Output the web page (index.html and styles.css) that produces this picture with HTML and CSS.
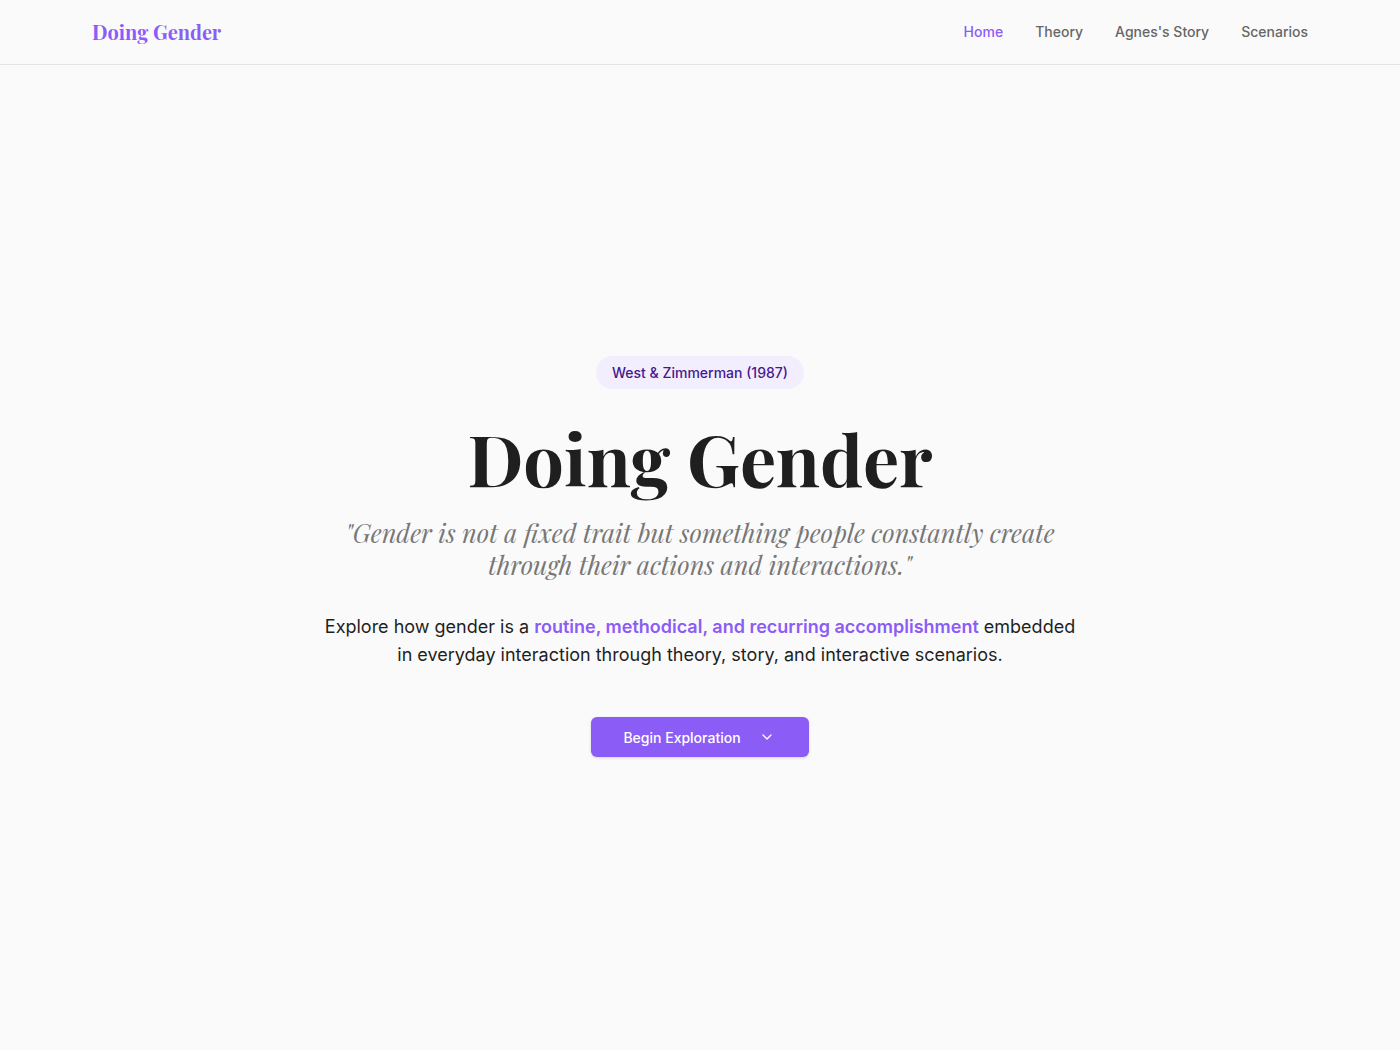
FILE: index.html
```html
<!DOCTYPE html>
<html lang="en">
<head>
<meta charset="utf-8">
<title>Doing Gender</title>
<link rel="stylesheet" href="styles.css">
</head>
<body>
<header class="site-header">
  <div class="header-inner">
    <a class="logo" href="#">Doing Gender</a>
    <nav class="nav">
      <a class="nav-link active" href="#">Home</a>
      <a class="nav-link" href="#">Theory</a>
      <a class="nav-link" href="#">Agnes's Story</a>
      <a class="nav-link" href="#">Scenarios</a>
    </nav>
  </div>
</header>
<main class="hero">
  <div class="hero-content">
    <span class="badge">West &amp; Zimmerman (1987)</span>
    <h1 class="title">Doing Gender</h1>
    <p class="quote">"Gender is not a fixed trait but something people constantly create<br>through their actions and interactions."</p>
    <p class="lead">Explore how gender is a <strong class="accent">routine, methodical, and recurring accomplishment</strong> embedded in everyday interaction through theory, story, and interactive scenarios.</p>
    <button class="cta" type="button">
      <span>Begin Exploration</span>
      <svg class="chev" width="16" height="16" viewBox="0 0 24 24" fill="none" stroke="currentColor" stroke-width="2" stroke-linecap="round" stroke-linejoin="round"><path d="M6 9l6 6 6-6"/></svg>
    </button>
  </div>
</main>
</body>
</html>
```

FILE: styles.css
```css
* { box-sizing: border-box; }
html, body { margin: 0; padding: 0; }
body {
  background: #fafafa;
  font-family: Inter, "Noto Sans", sans-serif;
  color: #1f1f1f;
}
.site-header {
  height: 65px;
  border-bottom: 1px solid #e5e5e5;
  background: #fafafa;
}
.header-inner {
  max-width: 1216px;
  margin: 0 auto;
  height: 63px;
  display: flex;
  align-items: center;
  justify-content: space-between;
}
.logo {
  font-family: "Playfair Display", "Liberation Serif", "DejaVu Serif", serif;
  font-weight: 700;
  font-size: 20px;
  color: #8b5cf6;
  text-decoration: none;
}
.nav {
  display: flex;
  gap: 32px;
}
.nav-link {
  font-size: 14px;
  color: #666;
  text-decoration: none;
  font-weight: 500;
}
.nav-link.active { color: #8b5cf6; }
.hero {
  min-height: calc(100vh - 65px);
  display: flex;
  align-items: center;
  justify-content: center;
}
.hero-content {
  display: flex;
  flex-direction: column;
  align-items: center;
  text-align: center;
  padding-bottom: 2px;
}
.badge {
  display: inline-block;
  background: #f3eefe;
  color: #46198f;
  font-size: 14px;
  font-weight: 500;
  padding: 7px 16px;
  border-radius: 999px;
  line-height: 19px;
}
.title {
  font-family: "Playfair Display", "Liberation Serif", "DejaVu Serif", serif;
  font-weight: 700;
  font-size: 72px;
  line-height: 80px;
  color: #1f1f1f;
  margin: 28px 0 20px;
}
.quote {
  font-family: "Playfair Display", "Liberation Serif", "DejaVu Serif", serif;
  font-style: italic;
  font-size: 25.4px;
  line-height: 32px;
  color: #777;
  margin: 0 0 32px;
}
.lead {
  font-size: 18px;
  line-height: 28px;
  max-width: 760px;
  margin: 0 0 48px;
  color: #1f1f1f;
}
.accent {
  color: #8b5cf6;
  font-weight: 600;
}
.cta {
  display: inline-flex;
  align-items: center;
  gap: 18px;
  height: 40px;
  padding: 0 34px 0 32px;
  background: #8b5cf6;
  color: #fff;
  border: none;
  border-radius: 6px;
  font-family: Inter, "Noto Sans", sans-serif;
  font-size: 14px;
  font-weight: 500;
  box-shadow: 0 1px 3px rgba(0,0,0,0.15);
  cursor: pointer;
}
.chev { display: block; }
```
